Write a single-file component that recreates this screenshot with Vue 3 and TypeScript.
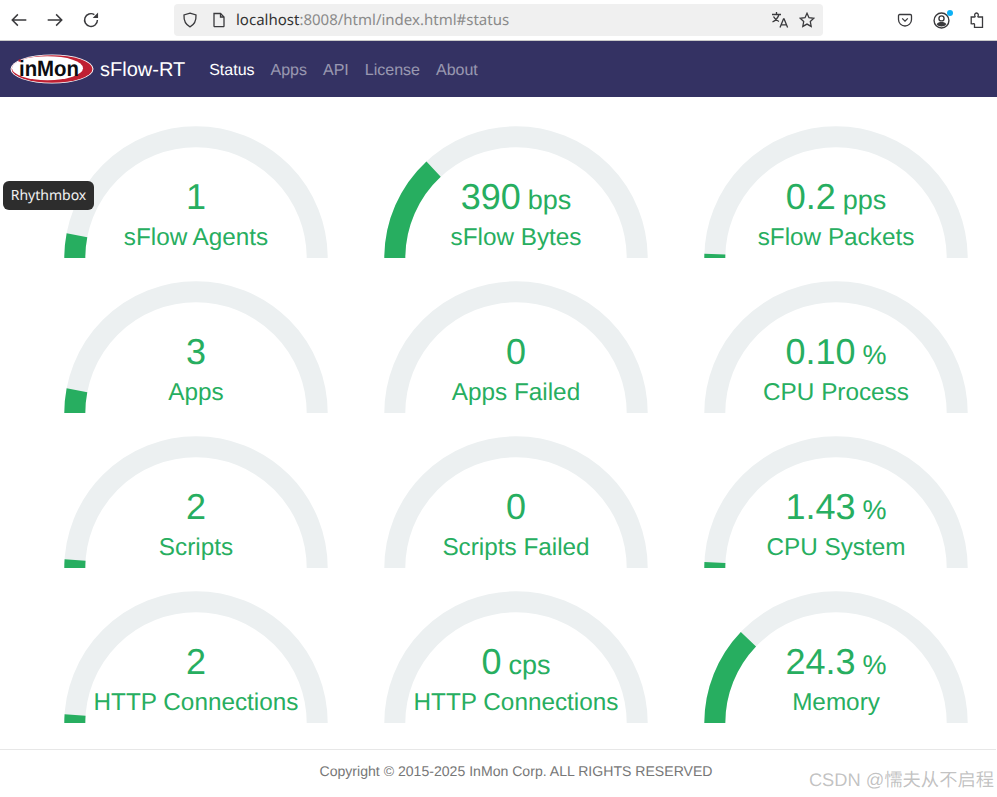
<script setup lang="ts">
interface Gauge {
  value: string
  unit?: string
  label: string
  fraction: number
}

const gauges: Gauge[] = [
  { value: '1', label: 'sFlow Agents', fraction: 0.06 },
  { value: '390', unit: 'bps', label: 'sFlow Bytes', fraction: 0.262 },
  { value: '0.2', unit: 'pps', label: 'sFlow Packets', fraction: 0.01 },
  { value: '3', label: 'Apps', fraction: 0.06 },
  { value: '0', label: 'Apps Failed', fraction: 0 },
  { value: '0.10', unit: '%', label: 'CPU Process', fraction: 0 },
  { value: '2', label: 'Scripts', fraction: 0.021 },
  { value: '0', label: 'Scripts Failed', fraction: 0 },
  { value: '1.43', unit: '%', label: 'CPU System', fraction: 0.0143 },
  { value: '2', label: 'HTTP Connections', fraction: 0.021 },
  { value: '0', unit: 'cps', label: 'HTTP Connections', fraction: 0 },
  { value: '24.3', unit: '%', label: 'Memory', fraction: 0.243 }
]

const navItems = ['Status', 'Apps', 'API', 'License', 'About']

const R = 121.2
const CX = 132
const CY = 132

function arc(fraction: number): string {
  const angle = Math.PI * fraction
  const x = CX - R * Math.cos(angle)
  const y = CY - R * Math.sin(angle)
  return `M${CX - R} ${CY}A${R} ${R} 0 0 1 ${x.toFixed(2)} ${y.toFixed(2)}`
}
</script>

<template>
  <div class="page">
    <header class="chrome">
      <div class="history">
        <svg class="ico" viewBox="0 0 16 16"><path d="M14.5 8H2M7 3 2 8l5 5" /></svg>
        <svg class="ico" viewBox="0 0 16 16"><path d="M1.5 8H14M9 3l5 5-5 5" /></svg>
        <svg class="ico" viewBox="0 0 16 16"><path d="M13.7 8A5.700 5.700 0 1 1 11 3.200" /><path class="solid" d="M14.300 1.400v4.800H9.500z" /></svg>
      </div>
      <div class="urlbar">
        <svg class="ico small" viewBox="0 0 16 16"><path d="M8 1.200 14 3c.3 5.500-1.600 9.600-6 11.800C3.600 12.600 1.700 8.500 2 3z" /></svg>
        <svg class="ico small page-ico" viewBox="0 0 16 16"><path d="M3 1.500h6.500l3.500 3.500v9a.7.7 0 0 1-.7.7H3.700a.7.7 0 0 1-.7-.7z" /><path d="M9.500 1.500v3.500H13" /></svg>
        <span class="url"><span class="host">localhost</span>:8008/html/index.html#status</span>
        <svg class="ico translate" viewBox="0 0 18 18"><path d="M1 3.500h9M5.500 1v2.500M8 3.500C7 7 4.500 9.500 1.500 11M2.500 5.500c1 2.200 3 4 5.500 5" /><path d="M9 16.500 12.500 8h.6l3.500 8.500M10.300 13.800h5" /></svg>
        <svg class="ico star small" viewBox="0 0 16 16"><path d="m8 1.300 2 4.400 4.800.6-3.500 3.300.9 4.800L8 12.100l-4.200 2.300.9-4.800L1.200 6.300 6 5.700z" /></svg>
      </div>
      <div class="tools">
        <svg class="ico small" viewBox="0 0 16 16"><path d="M2.700 2.500h10.600c.7 0 1.200.5 1.200 1.200v3.800c0 3.700-3 6.500-6.500 6.500s-6.500-2.800-6.500-6.500V3.700c0-.7.500-1.200 1.200-1.200z" /><path d="m5.200 6.400 2.800 2.700 2.800-2.700" /></svg>
        <div class="account">
          <svg class="ico avatar" viewBox="0 0 16 16"><circle cx="8" cy="8" r="7" /><circle cx="8" cy="6" r="2.400" /><path class="solid" d="M3.500 11.500c1-1.500 2.500-2 4.500-2s3.500.5 4.500 2c-1 1.300-2.600 2.100-4.500 2.100s-3.500-.8-4.500-2.100z" /></svg>
          <span class="badge"></span>
        </div>
        <svg class="ico small" viewBox="0 0 16 16"><path d="M2.200 5H5.500c.6 0 .8-.5.5-1-.6-1.100-.2-3 1.500-3s2.100 1.900 1.500 3c-.3.500-.1 1 .5 1h4v10.500h-8v-3.200c0-.5-.4-.7-.9-.6-1.100.3-2.400 0-2.400 0z" /></svg>
      </div>
    </header>

    <nav class="navbar">
      <svg class="logo" viewBox="0 0 84 30">
        <ellipse class="logo-edge" cx="42" cy="15" rx="41.500" ry="14.500" />
        <ellipse class="logo-red" cx="42" cy="15" rx="40.500" ry="13.700" />
        <ellipse class="logo-white" cx="37.500" cy="14.200" rx="35.500" ry="12" />
        <text class="logo-text" x="39" y="21.500" text-anchor="middle" textLength="60" lengthAdjust="spacingAndGlyphs">inMon</text>
        <circle class="logo-dot" cx="9.700" cy="6.500" r="1.300" />
      </svg>
      <span class="brand">sFlow-RT</span>
      <ul class="nav-list">
        <li v-for="(item, i) in navItems" :key="item" :class="{ active: i === 0 }">{{ item }}</li>
      </ul>
    </nav>

    <main class="grid">
      <div v-for="(g, i) in gauges" :key="i" class="gauge">
        <svg class="dial" viewBox="0 0 264 132" width="264" height="132">
          <path class="track" :d="arc(1)" />
          <path v-if="g.fraction > 0" class="fill" :d="arc(g.fraction)" />
        </svg>
        <div class="readout">
          <div class="value">{{ g.value }}<span v-if="g.unit" class="unit">{{ g.unit }}</span></div>
          <div class="label">{{ g.label }}</div>
        </div>
      </div>
    </main>

    <footer class="footer">
      <p>Copyright © 2015-2025 InMon Corp. ALL RIGHTS RESERVED</p>
    </footer>

    <div class="tooltip">Rhythmbox</div>
    <div class="watermark">CSDN @懦夫从不启程</div>
  </div>
</template>

<style>
html,
body {
  margin: 0;
  background: #fff;
}
</style>

<style scoped>
.page {
  position: relative;
  width: 997px;
  height: 797px;
  overflow: hidden;
  font-family: "Liberation Sans", Arial, sans-serif;
  text-rendering: geometricPrecision;
  background: #fff;
}

.chrome {
  display: flex;
  align-items: center;
  height: 40px;
  border-bottom: 1px solid #c9c9c9;
  background: #fff;
}
.ico {
  width: 18px;
  height: 18px;
  fill: none;
  stroke: #3a3a3d;
  stroke-width: 1.300;
  flex: none;
}
.ico.small {
  width: 16px;
  height: 16px;
}
.solid {
  fill: #3a3a3d;
  stroke: none;
}
.history {
  display: flex;
  gap: 18px;
  padding-left: 10px;
  width: 174px;
  box-sizing: border-box;
}
.urlbar {
  display: flex;
  align-items: center;
  width: 649px;
  height: 32px;
  margin-top: -1px;
  border-radius: 4px;
  background: #f0f0f0;
  padding-left: 8px;
  box-sizing: border-box;
}
.page-ico {
  margin-left: 13px;
}
.url {
  margin-left: 9px;
  font-family: "Noto Sans", sans-serif;
  font-size: 15px;
  color: #8a8a8a;
  flex: 1;
  white-space: nowrap;
}
.host {
  color: #333;
}
.translate {
  margin-right: 10px;
}
.star {
  margin-right: 8px;
}
.tools {
  display: flex;
  align-items: center;
  gap: 19.5px;
  padding-left: 74px;
}
.account {
  position: relative;
  display: flex;
}
.avatar {
  width: 17px;
  height: 17px;
}
.badge {
  position: absolute;
  top: -2px;
  right: -3px;
  width: 6px;
  height: 6px;
  border-radius: 50%;
  background: #0db1f5;
}

.navbar {
  display: flex;
  align-items: center;
  height: 56px;
  padding-left: 10px;
  background: #343263;
}
.logo {
  width: 84px;
  height: 30px;
  flex: none;
}
.logo-edge {
  fill: #fff;
}
.logo-red {
  fill: #bf2033;
}
.logo-white {
  fill: #fff;
}
.logo-text {
  font-family: "Liberation Sans", Arial, sans-serif;
  font-size: 22px;
  font-weight: 700;
  fill: #0c0c10;
}
.logo-dot {
  fill: #bf2033;
}
.brand {
  margin: 2px 0 0 6px;
  font-size: 20px;
  color: #fff;
}
.nav-list {
  display: flex;
  gap: 16px;
  margin: 3px 0 0 24px;
  padding: 0;
  list-style: none;
  font-size: 16px;
  color: rgba(255, 255, 255, 0.5);
}
.nav-list .active {
  color: #fff;
}

.grid {
  display: grid;
  grid-template-columns: repeat(3, 320px);
  row-gap: 23px;
  padding: 29px 0 0 36px;
}
.gauge {
  display: grid;
  justify-items: center;
  height: 132px;
}
.dial,
.readout {
  grid-area: 1 / 1;
}
.track,
.fill {
  fill: none;
  stroke-width: 21;
}
.track {
  stroke: #ecf0f1;
}
.fill {
  stroke: #27ae60;
}
.readout {
  padding-top: 51px;
  text-align: center;
  color: #27ae60;
  white-space: nowrap;
}
.value {
  font-size: 36px;
  line-height: 40px;
  margin-bottom: 6px;
}
.unit {
  margin-left: 7px;
  font-size: 27px;
  line-height: 0;
}
.label {
  font-size: 24.3px;
  line-height: 30px;
}

.footer {
  margin-top: 26px;
  border-top: 1px solid #e7e7e7;
  padding-left: 36px;
  width: 960px;
}
.footer p {
  margin: 13px 0 0;
  font-size: 14.08px;
  line-height: 17px;
  text-align: center;
  color: #777;
}

.tooltip {
  position: absolute;
  left: 3px;
  top: 181px;
  width: 91px;
  height: 29px;
  border-radius: 6px;
  background: #2d2d2d;
  color: #f1f1f1;
  font-family: "Noto Sans", sans-serif;
  font-size: 14px;
  line-height: 29px;
  text-align: center;
}
.watermark {
  position: absolute;
  right: 3px;
  top: 767px;
  font-family: "Liberation Sans", "Noto Sans CJK SC", sans-serif;
  font-size: 18.3px;
  line-height: 26px;
  color: rgba(120, 120, 120, 0.45);
  white-space: nowrap;
}
</style>
